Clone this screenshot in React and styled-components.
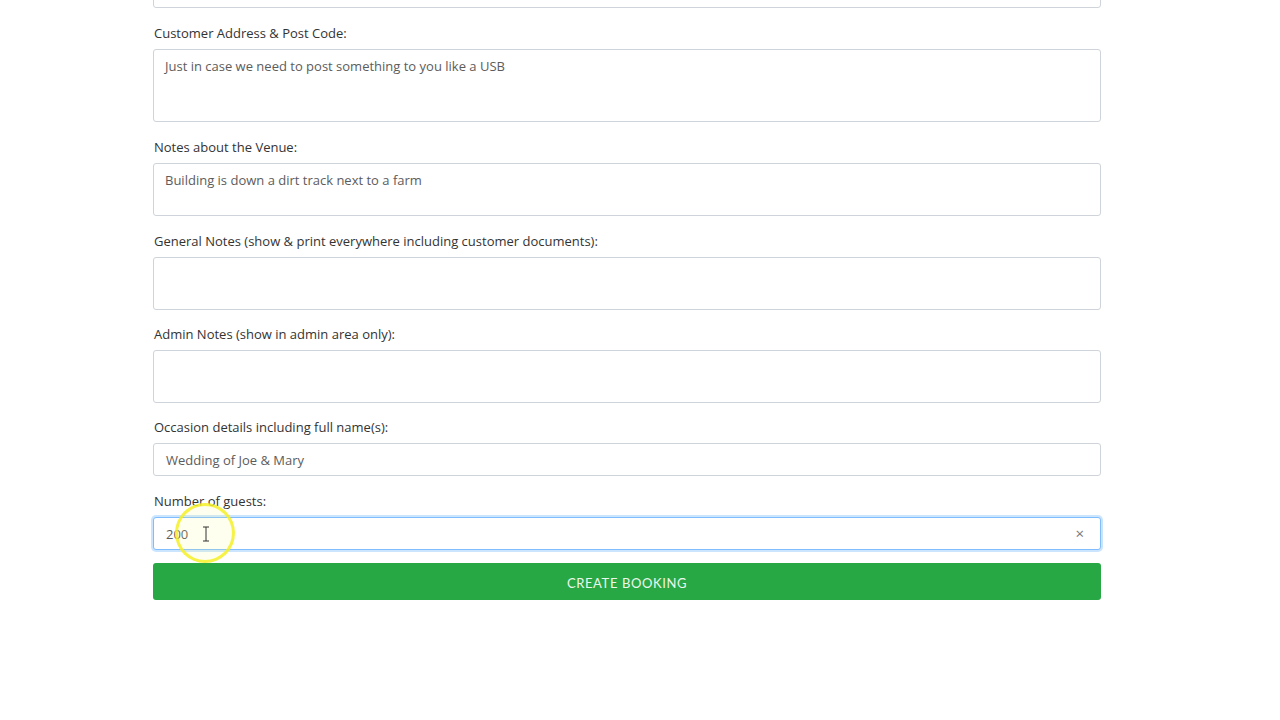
import styled, { createGlobalStyle } from "styled-components";

const GlobalStyle = createGlobalStyle`
  html, body {
    margin: 0;
    padding: 0;
    background: #fff;
    overflow: hidden;
  }
  body {
    font-family: "Open Sans", "Noto Sans", sans-serif;
  }
`;

const Page = styled.div`
  width: 1280px;
  height: 720px;
  overflow: hidden;
  position: relative;
`;

const Form = styled.form`
  width: 948px;
  margin: -25px 0 0 153px;
  display: flex;
  flex-direction: column;
`;

const Group = styled.div`
  margin-bottom: ${(p) => p.gap || 15}px;
  position: relative;
`;

const Label = styled.label`
  display: block;
  font-size: 13px;
  line-height: 18px;
  color: #333;
  margin-bottom: 7px;
  padding: 1px 0 0 1px;
`;

const Field = styled.div`
  box-sizing: border-box;
  height: ${(p) => p.h}px;
  border: 1px solid ${(p) => (p.focused ? "#80bdff" : "#ced4da")};
  border-radius: 3px;
  box-shadow: ${(p) =>
    p.focused ? "0 0 0 2px rgba(0, 123, 255, 0.2)" : "none"};
  padding: ${(p) => (p.single ? "2px 12px 0" : "8px 11px")};
  display: flex;
  align-items: ${(p) => (p.single ? "center" : "flex-start")};
  font-size: 13px;
  line-height: 17px;
  color: #5c5c5c;
  background: #fff;
`;

const Value = styled.span`
  flex: 1;
`;

const Clear = styled.span`
  font-size: 15px;
  color: #777;
  margin: -2px 4px 0 0;
`;

const Button = styled.button`
  height: 37px;
  padding-top: 3px;
  border: none;
  border-radius: 3px;
  background: #28a745;
  color: #e9f7ec;
  font-family: Lato, "Open Sans", sans-serif;
  font-size: 13px;
  letter-spacing: 0.6px;
  text-transform: uppercase;
  cursor: pointer;
`;

const Highlight = styled.div`
  position: absolute;
  left: 175px;
  top: 503px;
  width: 60px;
  height: 60px;
  border-radius: 50%;
  border: 3px solid rgba(245, 240, 40, 0.85);
  background: rgba(255, 255, 120, 0.12);
  box-sizing: border-box;
  pointer-events: none;
`;

const Caret = styled.svg`
  position: absolute;
  left: 202px;
  top: 526px;
  pointer-events: none;
`;

const fields = [
  { label: "Customer Address & Post Code:", h: 73, text: "Just in case we need to post something to you like a USB" },
  { label: "Notes about the Venue:", h: 53, text: "Building is down a dirt track next to a farm" },
  { label: "General Notes (show & print everywhere including customer documents):", h: 53, text: "", gap: 14 },
  { label: "Admin Notes (show in admin area only):", h: 53, text: "", gap: 14 },
  { label: "Occasion details including full name(s):", h: 33, text: "Wedding of Joe & Mary", single: true },
];

export default function App() {
  return (
    <Page>
      <GlobalStyle />
      <Form onSubmit={(e) => e.preventDefault()}>
        <Group>
          <Field h={33} single />
        </Group>
        {fields.map((f, i) => (
          <Group key={i} gap={f.gap}>
            <Label>{f.label}</Label>
            <Field h={f.h} single={f.single}>
              <Value>{f.text}</Value>
            </Field>
          </Group>
        ))}
        <Group gap={13}>
          <Label>Number of guests:</Label>
          <Field h={33} single focused>
            <Value>200</Value>
            <Clear>×</Clear>
          </Field>
        </Group>
        <Button type="submit">Create Booking</Button>
      </Form>
      <Highlight />
      <Caret width="8" height="16" viewBox="0 0 8 16">
        <path d="M1 1h6M4 1v14M1 15h6" stroke="#333" strokeWidth="1" fill="none" />
      </Caret>
    </Page>
  );
}
